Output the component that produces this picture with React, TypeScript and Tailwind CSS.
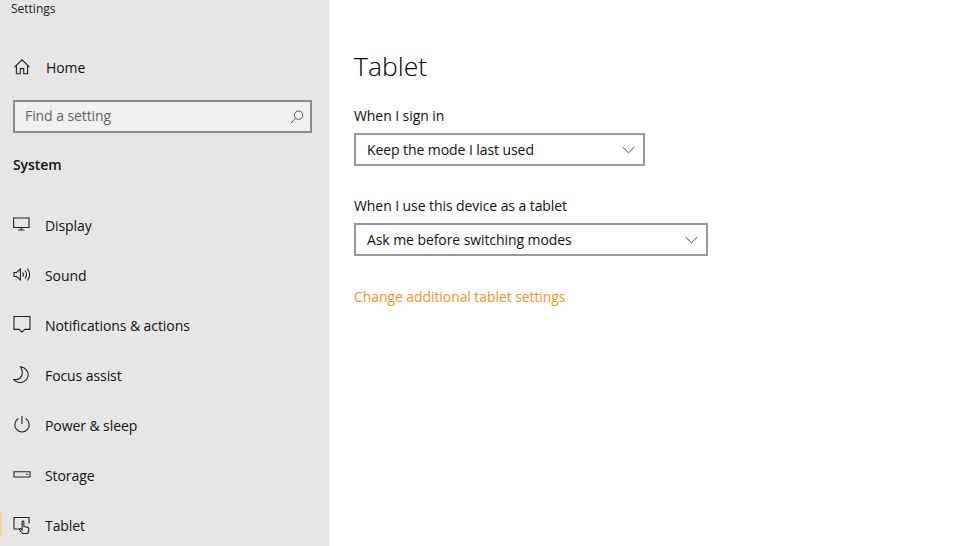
import React from 'react'

const font = "font-['Open_Sans',sans-serif]"

type IconProps = { className?: string }

const Svg = ({ children, className }: IconProps & { children: React.ReactNode }) => (
  <svg viewBox="0 0 18 18" fill="none" stroke="#222" strokeWidth="1.1" className={className ?? 'w-[18px] h-[18px] shrink-0'}>
    {children}
  </svg>
)

const HomeIcon = () => (
  <Svg>
    <path d="M1.500 9.200 9 1.800l7.500 7.400M3.400 7.600v8.200h3.900v-5.200h3.400v5.200h3.900V7.600" />
  </Svg>
)
const DisplayIcon = () => (
  <Svg>
    <path d="M.6 2h15.400v9.500H.6zM8.300 11.500v2.500M5.200 14h6.200" />
  </Svg>
)
const SoundIcon = () => (
  <Svg>
    <path d="M1 6.500h2.600L7.400 3v11L3.600 10.500H1zM9.600 6.300c1 1.300 1 3.100 0 4.400M12 4.500c1.800 2.400 1.800 5.600 0 8M14.400 2.500c2.700 3.600 2.700 8.400 0 12" />
  </Svg>
)
const NotificationIcon = () => (
  <Svg>
    <path d="M1 .5h16v12.900h-5.200L9 16.200l-2.800-2.800H1z" />
  </Svg>
)
const MoonIcon = () => (
  <Svg>
    <path d="M7.500 .8c5 .6 8.500 5 7.500 9.500-1 4.500-6 7-10 6-2-.5-3.500-1.500-4.500-2.800 4 .5 7.500-1 8.500-4.500.8-3-.2-6-1.500-8.200z" />
  </Svg>
)
const PowerIcon = () => (
  <Svg>
    <path d="M9 0v8M5.400 2.600a7.200 7.200 0 1 0 7.200 0" />
  </Svg>
)
const StorageIcon = () => (
  <Svg>
    <path d="M1 5.700h16v5.300H1zM13.200 8.300h1.800" />
  </Svg>
)
const TabletIcon = () => (
  <Svg>
    <path d="M7.500 13H1V1.500h15v6" />
    <path d="M9.500 17.500 6.800 14c-.8-1 .4-2 1.300-1.200l1 1V6c0-1.200 1.800-1.200 1.800 0v4.500l3.300.6c1 .2 1.600.8 1.600 1.800 0 1.800-.3 3.300-1 4.600z" fill="#e6e6e6" />
  </Svg>
)
const SearchIcon = () => (
  <svg viewBox="0 0 14 14" fill="none" stroke="#555" strokeWidth="1" className="w-[14px] h-[14px]">
    <circle cx="8.600" cy="5.200" r="4.200" />
    <path d="M5.600 8.200.8 13.200" />
  </svg>
)
const Chevron = () => (
  <svg viewBox="0 0 14 8" fill="none" stroke="#333" strokeWidth="1" className="w-[13px] h-[8px] shrink-0">
    <path d="M.7.800 7 7 13.300.800" />
  </svg>
)

const NAV = [
  { label: 'Display', icon: DisplayIcon },
  { label: 'Sound', icon: SoundIcon },
  { label: 'Notifications & actions', icon: NotificationIcon },
  { label: 'Focus assist', icon: MoonIcon },
  { label: 'Power & sleep', icon: PowerIcon },
  { label: 'Storage', icon: StorageIcon },
  { label: 'Tablet', icon: TabletIcon, active: true },
]

function Select({ label, value, width }: { label: string; value: string; width: string }) {
  return (
    <div className="flex flex-col">
      <div className="h-[22px] leading-[22px] text-[14px] tracking-[-0.08px] text-[#111]">{label}</div>
      <div className={`mt-[6px] h-[33px] flex items-center justify-between border-2 border-[#999] pl-[11px] pr-[8px] text-[14px] tracking-[-0.08px] text-[#111] ${width}`}>
        <span>{value}</span>
        <Chevron />
      </div>
    </div>
  )
}

export default function App() {
  return (
    <div className={`${font} flex w-[970px] h-[546px] overflow-hidden bg-white`}>
      <aside className="flex flex-col w-[329px] h-full bg-[#e6e6e6] shrink-0 overflow-hidden">
        <div className="shrink-0 pl-[11px] h-[18px] leading-[18px] text-[12px] text-[#222]">Settings</div>

        <div className="shrink-0 mt-[39px] h-[20px] flex items-center pl-[13px] gap-[15px] text-[14px] tracking-[-0.08px] text-[#111]">
          <HomeIcon />
          <span>Home</span>
        </div>

        <div className="shrink-0 mt-[23px] ml-[13px] w-[299px] h-[33px] flex items-center justify-between border-2 border-[#8c8c8c] bg-[#f0f0f0] pl-[10px] pr-[6px] text-[14px] tracking-[-0.08px] text-[#666]">
          <span className="pb-[2px]">Find a setting</span>
          <SearchIcon />
        </div>

        <div className="shrink-0 mt-[22px] pl-[13px] h-[20px] leading-[20px] text-[14px] tracking-[-0.08px] font-semibold text-[#111]">System</div>

        <nav className="shrink-0 mt-[25px] flex flex-col">
          {NAV.map(({ label, icon: Icon, active }) => (
            <div key={label} className="relative h-[50px] shrink-0 flex items-center pl-[13px] gap-[14px] text-[14px] tracking-[-0.08px] text-[#111]">
              {active && <span className="absolute left-0 top-[11px] h-[26px] w-[2px] bg-[#f3d3aa]" />}
              <Icon />
              <span>{label}</span>
            </div>
          ))}
        </nav>
      </aside>

      <main className="flex-1 pl-[25px] pt-[47px] flex flex-col">
        <h1 className="text-[26.500px] leading-[38px] font-light text-black">Tablet</h1>
        <div className="mt-[20px]">
          <Select label="When I sign in" value="Keep the mode I last used" width="w-[291px]" />
        </div>
        <div className="mt-[29px]">
          <Select label="When I use this device as a tablet" value="Ask me before switching modes" width="w-[354px]" />
        </div>
        <a className="mt-[30px] text-[14px] tracking-[-0.08px] leading-[22px] text-[#f7931e]">Change additional tablet settings</a>
      </main>
    </div>
  )
}
